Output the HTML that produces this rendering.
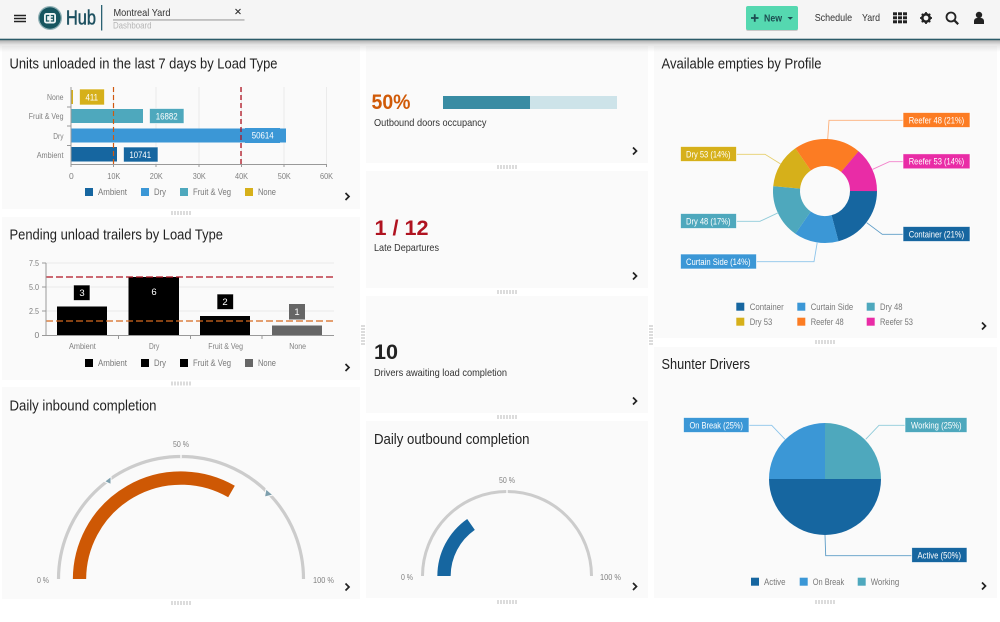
<!DOCTYPE html>
<html><head><meta charset="utf-8"><style>
html,body{margin:0;padding:0;width:1000px;height:622px;overflow:hidden;background:#fff}
svg{display:block;font-family:"Liberation Sans",sans-serif;filter:blur(.3px)}
.t{font-size:14.5px;fill:#222}
.a{font-size:8.5px;fill:#808080}
.l{font-size:9.5px;fill:#787878}
.w{font-size:9.5px;fill:#fff}
.n{font-size:9.500px;fill:#fff}
.s{font-size:10.5px;fill:#333}
.g{stroke:#ebebeb;stroke-width:1;fill:none}
.h{stroke:#dcdcdc;stroke-width:4;stroke-dasharray:2 1;fill:none}
.c{stroke:#222;stroke-width:1.7;fill:none}
.b{stroke:#fff;stroke-width:.8;stroke-opacity:.8}
.ld{fill:none;stroke-width:.9}
</style></head><body>
<svg width="1000" height="622" viewBox="0 0 1000 622" xmlns="http://www.w3.org/2000/svg">
<rect width="1000" height="622" fill="#fff"/>
<g fill="#fafafa">
<rect x="2" y="46" width="358" height="163"/><rect x="2" y="217" width="358" height="163"/><rect x="2" y="387" width="358" height="212"/>
<rect x="366" y="46" width="282" height="117"/><rect x="366" y="171" width="282" height="117"/><rect x="366" y="296" width="282" height="117"/><rect x="366" y="421" width="282" height="177"/>
<rect x="654" y="46" width="343" height="292"/><rect x="654" y="347" width="343" height="251"/>
</g>
<!-- handles -->
<path class="h" d="M171 213h20M171 383.500h20M171 603h20M497 167h20M497 292h20M497 417h20M497 602h20M815 342h20M815 602h20"/>
<path class="h" d="M363 325v20M651 325v20"/>

<!-- Chart 1 -->
<text class="t" x="9.500" y="68.500" textLength="268" lengthAdjust="spacingAndGlyphs">Units unloaded in the last 7 days by Load Type</text>
<path class="g" d="M113.500 87v77M156 87v77M199 87v77M241.500 87v77M284 87v77M326.500 87v77"/>
<g fill="#d6b01a"><rect x="71" y="90" width="2" height="14"/><rect class="b" x="79.500" y="89" width="25" height="16"/></g>
<g fill="#4ea8bd"><rect x="71" y="109" width="72" height="14"/><rect class="b" x="149.500" y="108.500" width="34.500" height="15"/></g>
<g fill="#3b97d6"><rect x="71" y="128.500" width="215" height="14"/><rect x="245" y="128" width="35" height="15"/></g>
<g fill="#1666a0"><rect x="71" y="147" width="46" height="14.500"/><rect class="b" x="123.500" y="147" width="34.500" height="15"/></g>
<path d="M113.500 87v77" stroke="#d0580f" stroke-width="1.200" stroke-dasharray="5 3" fill="none"/>
<path d="M241 87v77" stroke="#b01320" stroke-width="1.300" stroke-dasharray="5 3" fill="none"/>
<path d="M71 87v77.500M71 164.500h255.500M67 107h4M67 126h4M67 145.500h4M71 164v3M113.500 164v3M156 164v3M199 164v3M241.500 164v3M284 164v3M326.500 164v3" stroke="#999" stroke-width="1" fill="none"/>
<g class="n"><text x="85.500" y="100.500" textLength="12.500" lengthAdjust="spacingAndGlyphs">411</text><text x="155.700" y="119.500" textLength="22" lengthAdjust="spacingAndGlyphs">16882</text><text x="251.700" y="138.500" textLength="22" lengthAdjust="spacingAndGlyphs">50614</text><text x="129.500" y="158" textLength="21.500" lengthAdjust="spacingAndGlyphs">10741</text></g>
<g class="a">
<text x="47" y="100" textLength="16.500" lengthAdjust="spacingAndGlyphs">None</text>
<text x="28.700" y="119" textLength="34.800" lengthAdjust="spacingAndGlyphs">Fruit &amp; Veg</text>
<text x="53.300" y="139" textLength="10.200" lengthAdjust="spacingAndGlyphs">Dry</text>
<text x="36.700" y="158" textLength="26.800" lengthAdjust="spacingAndGlyphs">Ambient</text>
<text x="69" y="179">0</text>
<text x="107.300" y="179" textLength="13" lengthAdjust="spacingAndGlyphs">10K</text>
<text x="149.800" y="179" textLength="13" lengthAdjust="spacingAndGlyphs">20K</text>
<text x="192.800" y="179" textLength="13" lengthAdjust="spacingAndGlyphs">30K</text>
<text x="235" y="179" textLength="13" lengthAdjust="spacingAndGlyphs">40K</text>
<text x="277.800" y="179" textLength="13" lengthAdjust="spacingAndGlyphs">50K</text>
<text x="320" y="179" textLength="13" lengthAdjust="spacingAndGlyphs">60K</text>
</g>
<rect x="85" y="188" width="8" height="8" fill="#1666a0"/><text class="l" x="98" y="195" textLength="29" lengthAdjust="spacingAndGlyphs">Ambient</text>
<rect x="141" y="188" width="8" height="8" fill="#3b97d6"/><text class="l" x="154" y="195" textLength="12" lengthAdjust="spacingAndGlyphs">Dry</text>
<rect x="180" y="188" width="8" height="8" fill="#4ea8bd"/><text class="l" x="193" y="195" textLength="38" lengthAdjust="spacingAndGlyphs">Fruit &amp; Veg</text>
<rect x="245" y="188" width="8" height="8" fill="#d6b01a"/><text class="l" x="258" y="195" textLength="18" lengthAdjust="spacingAndGlyphs">None</text>
<path class="c" d="M345.500 193l3.500 3.500l-3.500 3.500"/>

<!-- Chart 2 -->
<text class="t" x="9.500" y="239.500" textLength="213.500" lengthAdjust="spacingAndGlyphs">Pending unload trailers by Load Type</text>
<path class="g" d="M46 263h288M46 287h288M46 311h288"/>
<g fill="#000"><rect x="57" y="306.500" width="50" height="28.500"/><rect x="128.500" y="277" width="50.500" height="58"/><rect x="200" y="316" width="50" height="19"/><rect class="b" x="73.500" y="285" width="16.500" height="15.500"/><rect class="b" x="217" y="294" width="16.500" height="15.500"/></g>
<g fill="#666"><rect x="272" y="325.500" width="50" height="9.500"/><rect x="289" y="304" width="16" height="15.500"/></g>
<path d="M46 277h288" stroke="#b01320" stroke-width="1.200" stroke-dasharray="7 3" fill="none"/>
<path d="M46 321h288" stroke="#d6691f" stroke-width="1.200" stroke-dasharray="7 3" fill="none"/>
<path d="M46 263v72.500M46 335.500h288M42 263h4M42 287h4M42 311h4M42 335.500h4M118.500 335v4M190.500 335v4M262 335v4" stroke="#999" stroke-width="1" fill="none"/>
<g class="n" text-anchor="middle"><text x="82" y="296">3</text><text x="154" y="295">6</text><text x="225" y="305">2</text><text x="297" y="315">1</text></g>
<g class="a">
<text x="29" y="266" textLength="10" lengthAdjust="spacingAndGlyphs">7.5</text>
<text x="29" y="290" textLength="10" lengthAdjust="spacingAndGlyphs">5.0</text>
<text x="29" y="314" textLength="10" lengthAdjust="spacingAndGlyphs">2.5</text>
<text x="34.500" y="338">0</text>
<text x="69" y="349" textLength="26.800" lengthAdjust="spacingAndGlyphs">Ambient</text>
<text x="149" y="349" textLength="10.300" lengthAdjust="spacingAndGlyphs">Dry</text>
<text x="208.300" y="349" textLength="34.700" lengthAdjust="spacingAndGlyphs">Fruit &amp; Veg</text>
<text x="289.300" y="349" textLength="16.700" lengthAdjust="spacingAndGlyphs">None</text>
</g>
<rect x="85" y="359" width="8" height="8" fill="#000"/><text class="l" x="98" y="366" textLength="29" lengthAdjust="spacingAndGlyphs">Ambient</text>
<rect x="141" y="359" width="8" height="8" fill="#000"/><text class="l" x="154" y="366" textLength="12" lengthAdjust="spacingAndGlyphs">Dry</text>
<rect x="180" y="359" width="8" height="8" fill="#000"/><text class="l" x="193" y="366" textLength="38" lengthAdjust="spacingAndGlyphs">Fruit &amp; Veg</text>
<rect x="245" y="359" width="8" height="8" fill="#666"/><text class="l" x="258" y="366" textLength="18" lengthAdjust="spacingAndGlyphs">None</text>
<path class="c" d="M345.500 364l3.500 3.500l-3.500 3.500"/>

<!-- Gauge 1 -->
<text class="t" x="9.500" y="410.500" textLength="147" lengthAdjust="spacingAndGlyphs">Daily inbound completion</text>
<path d="M58.500 579A122.500 122.500 0 0 1 303.500 579" fill="none" stroke="#ccc" stroke-width="3.200"/>
<path d="M181 452v6" stroke="#fafafa" stroke-width="1.500"/>
<path d="M79.500 579A101.500 101.500 0 0 1 231.500 491.500" fill="none" stroke="#ce5804" stroke-width="13.300"/>
<path d="M111 476.500L104.500 481.500L111 484.500Z" fill="#7d9fad" stroke="#fafafa" stroke-width="1"/>
<path d="M266 489L273 495L264.500 497Z" fill="#7d9fad" stroke="#fafafa" stroke-width="1"/>
<g class="a"><text x="173" y="447" textLength="16" lengthAdjust="spacingAndGlyphs">50 %</text><text x="37" y="583" textLength="12" lengthAdjust="spacingAndGlyphs">0 %</text><text x="313" y="583" textLength="21" lengthAdjust="spacingAndGlyphs">100 %</text></g>
<path class="c" d="M345.500 583.500l3.500 3.500l-3.500 3.500"/>

<!-- Middle -->
<text x="371.500" y="109" font-size="21" font-weight="700" fill="#d05a08" textLength="39" lengthAdjust="spacingAndGlyphs">50%</text>
<rect x="443" y="96" width="174" height="13" fill="#cde3e9"/><rect x="443" y="96" width="87" height="13" fill="#398ca3"/>
<text class="s" x="374" y="126" textLength="112.500" lengthAdjust="spacingAndGlyphs">Outbound doors occupancy</text>
<path class="c" d="M633 147.500l3.500 3.500l-3.500 3.500"/>
<text x="374.500" y="235" font-size="21" font-weight="700" fill="#b01320" textLength="54" lengthAdjust="spacingAndGlyphs">1 / 12</text>
<text class="s" x="374" y="251" textLength="65" lengthAdjust="spacingAndGlyphs">Late Departures</text>
<path class="c" d="M633 272.500l3.500 3.500l-3.500 3.500"/>
<text x="374" y="359" font-size="21" font-weight="700" fill="#222" textLength="24" lengthAdjust="spacingAndGlyphs">10</text>
<text class="s" x="374" y="376" textLength="133" lengthAdjust="spacingAndGlyphs">Drivers awaiting load completion</text>
<path class="c" d="M633 397.500l3.500 3.500l-3.500 3.500"/>
<text class="t" x="374" y="444" textLength="155.500" lengthAdjust="spacingAndGlyphs">Daily outbound completion</text>
<path d="M422.500 576A84.500 84.500 0 0 1 591.500 576" fill="none" stroke="#ccc" stroke-width="3"/>
<path d="M507 489v6" stroke="#fafafa" stroke-width="1.500"/>
<path d="M444 576A63 63 0 0 1 471 524.400" fill="none" stroke="#1666a0" stroke-width="13.300"/>
<g class="a"><text x="499" y="483" textLength="16" lengthAdjust="spacingAndGlyphs">50 %</text><text x="401" y="580" textLength="12" lengthAdjust="spacingAndGlyphs">0 %</text><text x="600" y="580" textLength="21" lengthAdjust="spacingAndGlyphs">100 %</text></g>
<path class="c" d="M633 583l3.500 3.500l-3.500 3.500"/>

<!-- Donut -->
<text class="t" x="661.500" y="68.500" textLength="160" lengthAdjust="spacingAndGlyphs">Available empties by Profile</text>
<g fill="none" stroke-width="27" transform="translate(825 191)">
<circle r="38.500" pathLength="360" stroke="#1666a0" stroke-dasharray="74.900 285.100"/>
<circle r="38.500" pathLength="360" stroke="#3b97d6" stroke-dasharray="49.900 310.100" transform="rotate(74.900)"/>
<circle r="38.500" pathLength="360" stroke="#4ea8bd" stroke-dasharray="60.600 299.400" transform="rotate(124.800)"/>
<circle r="38.500" pathLength="360" stroke="#d6b01a" stroke-dasharray="49.900 310.100" transform="rotate(185.400)"/>
<circle r="38.500" pathLength="360" stroke="#fc7c23" stroke-dasharray="74.900 285.100" transform="rotate(235.300)"/>
<circle r="38.500" pathLength="360" stroke="#e92ca6" stroke-dasharray="49.900 310.100" transform="rotate(310.200)"/>
</g>
<path class="ld" stroke="#fdb07a" d="M827.700 139L829 120.300H903"/>
<path class="ld" stroke="#f282cb" d="M872.700 169.300L889.300 161.700H903"/>
<path class="ld" stroke="#5d9cc6" d="M866.700 222.700L882.300 234.300H903"/>
<path class="ld" stroke="#e6cf6c" d="M736.700 154.300H765L780.700 164"/>
<path class="ld" stroke="#8fcbd9" d="M736.700 221.300H760L778.300 212.700"/>
<path class="ld" stroke="#8cc4ea" d="M756.700 261.700H814L817.300 242"/>
<rect class="b" x="903" y="112.500" width="67" height="15" fill="#fc7c23"/>
<rect class="b" x="903" y="153.800" width="67" height="15" fill="#e92ca6"/>
<rect class="b" x="903" y="226.500" width="67" height="15" fill="#1666a0"/>
<rect class="b" x="680.500" y="146.500" width="56" height="15" fill="#d6b01a"/>
<rect class="b" x="680.500" y="213.500" width="56" height="15" fill="#4ea8bd"/>
<rect class="b" x="680.500" y="254" width="76" height="15" fill="#3b97d6"/>
<text class="w" x="908.700" y="123.300" textLength="55.500" lengthAdjust="spacingAndGlyphs">Reefer 48 (21%)</text>
<text class="w" x="908.700" y="164.600" textLength="55.500" lengthAdjust="spacingAndGlyphs">Reefer 53 (14%)</text>
<text class="w" x="908.700" y="237.300" textLength="55.500" lengthAdjust="spacingAndGlyphs">Container (21%)</text>
<text class="w" x="686" y="157.300" textLength="44.500" lengthAdjust="spacingAndGlyphs">Dry 53 (14%)</text>
<text class="w" x="686" y="224.300" textLength="44.500" lengthAdjust="spacingAndGlyphs">Dry 48 (17%)</text>
<text class="w" x="686" y="264.800" textLength="64.500" lengthAdjust="spacingAndGlyphs">Curtain Side (14%)</text>
<rect x="736.300" y="302.700" width="8" height="8" fill="#1666a0"/><text class="l" x="749.700" y="310" textLength="34" lengthAdjust="spacingAndGlyphs">Container</text>
<rect x="797.300" y="302.700" width="8" height="8" fill="#3b97d6"/><text class="l" x="810.700" y="310" textLength="42.500" lengthAdjust="spacingAndGlyphs">Curtain Side</text>
<rect x="866.700" y="302.700" width="8" height="8" fill="#4ea8bd"/><text class="l" x="880" y="310" textLength="22.500" lengthAdjust="spacingAndGlyphs">Dry 48</text>
<rect x="736.300" y="317.700" width="8" height="8" fill="#d6b01a"/><text class="l" x="749.700" y="325" textLength="22.500" lengthAdjust="spacingAndGlyphs">Dry 53</text>
<rect x="797.300" y="317.700" width="8" height="8" fill="#fc7c23"/><text class="l" x="810.700" y="325" textLength="33" lengthAdjust="spacingAndGlyphs">Reefer 48</text>
<rect x="866.700" y="317.700" width="8" height="8" fill="#e92ca6"/><text class="l" x="880" y="325" textLength="33" lengthAdjust="spacingAndGlyphs">Reefer 53</text>
<path class="c" d="M982 322.500l3.500 3.500l-3.500 3.500"/>

<!-- Pie -->
<text class="t" x="661.500" y="369" textLength="88.500" lengthAdjust="spacingAndGlyphs">Shunter Drivers</text>
<path d="M769 479A56 56 0 0 0 881 479Z" fill="#1666a0"/>
<path d="M825 479V423A56 56 0 0 0 769 479Z" fill="#3b97d6"/>
<path d="M825 479V423A56 56 0 0 1 881 479Z" fill="#4ea8bd"/>
<path class="ld" stroke="#8cc4ea" d="M749 425.300H771.700L785 439.300"/>
<path class="ld" stroke="#8fcbd9" d="M905 425.300H879L865.700 439.300"/>
<path class="ld" stroke="#5d9cc6" d="M825 535L825.700 555.700H911.700"/>
<rect class="b" x="683.500" y="417.500" width="65.500" height="15" fill="#3b97d6"/>
<rect class="b" x="905" y="417.500" width="62" height="15" fill="#4ea8bd"/>
<rect class="b" x="911.700" y="547.500" width="55.300" height="15" fill="#1666a0"/>
<text class="w" x="689.500" y="428.300" textLength="53.500" lengthAdjust="spacingAndGlyphs">On Break (25%)</text>
<text class="w" x="911" y="428.300" textLength="50.500" lengthAdjust="spacingAndGlyphs">Working (25%)</text>
<text class="w" x="917.500" y="558.300" textLength="43.500" lengthAdjust="spacingAndGlyphs">Active (50%)</text>
<rect x="751" y="577.700" width="8" height="8" fill="#1666a0"/><text class="l" x="764" y="585" textLength="21.500" lengthAdjust="spacingAndGlyphs">Active</text>
<rect x="799.700" y="577.700" width="8" height="8" fill="#3b97d6"/><text class="l" x="812.700" y="585" textLength="31.500" lengthAdjust="spacingAndGlyphs">On Break</text>
<rect x="857.700" y="577.700" width="8" height="8" fill="#4ea8bd"/><text class="l" x="870.700" y="585" textLength="28.500" lengthAdjust="spacingAndGlyphs">Working</text>
<path class="c" d="M982 582.500l3.500 3.500l-3.500 3.500"/>

<!-- Header -->
<defs><linearGradient id="sh" x1="0" y1="0" x2="0" y2="1"><stop offset="0" stop-color="#000" stop-opacity=".32"/><stop offset=".4" stop-color="#000" stop-opacity=".1"/><stop offset="1" stop-color="#000" stop-opacity="0"/></linearGradient></defs>
<rect y="40" width="1000" height="12" fill="url(#sh)"/>
<rect width="1000" height="39" fill="#f5f5f5"/>
<rect y="38.700" width="1000" height="1.500" fill="#2b5a68"/>
<path d="M14 15.500h12M14 18.500h12M14 21.500h12" stroke="#222" stroke-width="1.500"/>
<circle cx="50" cy="18" r="12" fill="#8fb0b5"/><circle cx="50" cy="18" r="10.700" fill="#17555f"/>
<rect x="44" y="13" width="12" height="10.500" rx="2.500" fill="#eef4f4"/>
<path d="M49.300 15.500H46.500V21H49.300M50.800 15.500H53.500V21H50.800M50.800 18.200H53" stroke="#17555f" stroke-width="1.300" fill="none"/>
<text x="66" y="24.500" font-size="20" fill="#1d5060" stroke="#1d5060" stroke-width=".5" textLength="30" lengthAdjust="spacingAndGlyphs">Hub</text>
<rect x="101" y="5" width="1.300" height="25.500" fill="#2b6272"/>
<text x="113.500" y="16" font-size="10.500" fill="#333" textLength="57" lengthAdjust="spacingAndGlyphs">Montreal Yard</text>
<path d="M235.500 9l5 5M240.500 9l-5 5" stroke="#333" stroke-width="1.100"/>
<rect x="113" y="19.300" width="131.500" height="1.300" fill="#aaa"/>
<text x="113" y="28.500" font-size="9" fill="#b5b5b5" textLength="38.500" lengthAdjust="spacingAndGlyphs">Dashboard</text>
<rect x="746" y="6" width="52" height="24" rx="2" fill="#c9c9c9" transform="translate(0,1)"/>
<rect x="746" y="6" width="52" height="24" rx="2" fill="#55d8b0"/>
<path d="M751 18h7.500M754.750 14.200v7.600" stroke="#1c4b50" stroke-width="1.800"/>
<text x="764" y="21.500" font-size="10.500" font-weight="700" fill="#1c4b50" textLength="18" lengthAdjust="spacingAndGlyphs">New</text>
<path d="M787.500 17h5.500l-2.750 2.700Z" fill="#1c4b50"/>
<text x="814.700" y="21" font-size="10.500" fill="#333" textLength="37.500" lengthAdjust="spacingAndGlyphs">Schedule</text>
<text x="862" y="21" font-size="10.500" fill="#333" textLength="18" lengthAdjust="spacingAndGlyphs">Yard</text>
<g fill="#222"><rect x="893" y="12.300" width="4" height="3"/><rect x="898" y="12.300" width="4" height="3"/><rect x="903" y="12.300" width="4" height="3"/><rect x="893" y="16.300" width="4" height="3"/><rect x="898" y="16.300" width="4" height="3"/><rect x="903" y="16.300" width="4" height="3"/><rect x="893" y="20.300" width="4" height="3"/><rect x="898" y="20.300" width="4" height="3"/><rect x="903" y="20.300" width="4" height="3"/></g>
<circle cx="926" cy="18" r="3.700" fill="none" stroke="#222" stroke-width="2.600"/>
<path d="M926 12v12M920 18h12M921.800 13.800l8.400 8.400M930.200 13.800l-8.400 8.400" stroke="#222" stroke-width="1.700" stroke-dasharray="1.700 8.600"/>
<circle cx="951" cy="17" r="4.500" fill="none" stroke="#222" stroke-width="1.800"/>
<path d="M954.300 20.300l3.900 3.900" stroke="#222" stroke-width="2.200"/>
<circle cx="979" cy="15" r="3.200" fill="#222"/>
<path d="M974 24v-3a3 3 0 0 1 3-3h4a3 3 0 0 1 3 3v3Z" fill="#222"/>
</svg>
</body></html>
